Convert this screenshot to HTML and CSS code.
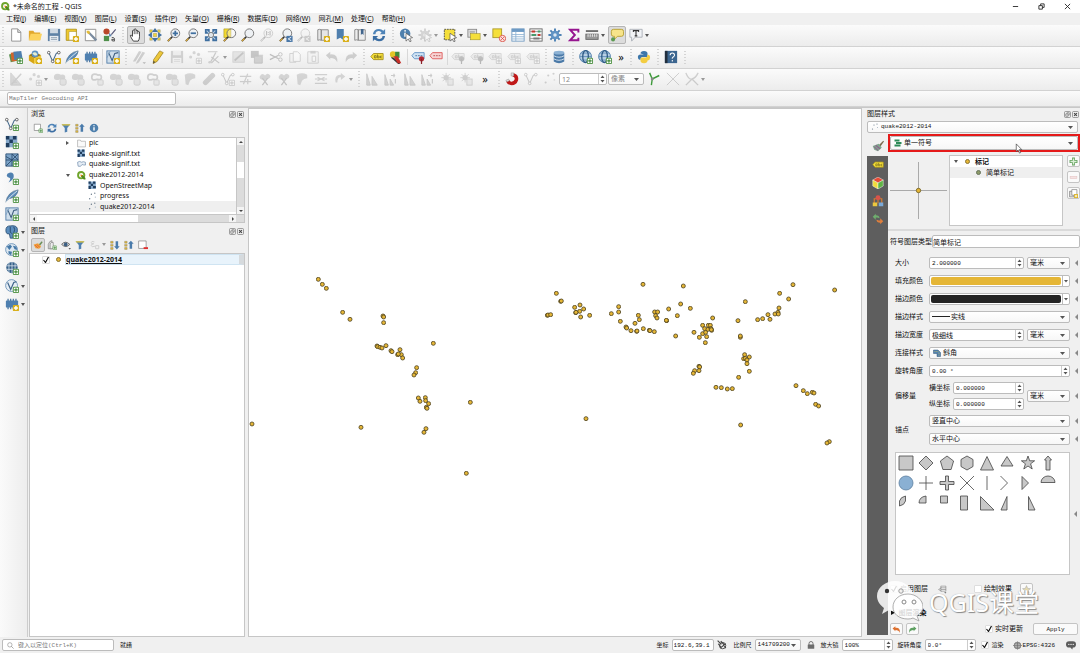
FILE: index.html
```
<!DOCTYPE html>
<html lang="zh-CN">
<head>
  <meta charset="UTF-8" />
  <title>*未命名的工程 - QGIS</title>
  <link rel="stylesheet" href="styles.css">
</head>
<body>
  <!-- icon sprite -->
  <svg class="sprite" aria-hidden="true">
    <defs>
      <marker id="quake" markerUnits="userSpaceOnUse" markerWidth="16" markerHeight="16" refX="8" refY="8">
        <circle cx="8" cy="8" r="6" fill="#e5b636" stroke="#4a4020" stroke-width="2.4" />
      </marker>
    </defs>
    <symbol id="badge-new" viewBox="0 0 16 16"><rect x="9" y="9" width="7" height="7" rx="1" fill="#d9b01c" /><path d="M12.500 10.200v4.600M10.200 12.500h4.600" stroke="#fff" stroke-width="1.600" /></symbol>
    <symbol id="badge-add" viewBox="0 0 16 16"><rect x="9.500" y="9.500" width="6" height="6" rx="1" fill="#fff" stroke="#5c9a52" stroke-width="1.200" /><path d="M12.500 10.500v4M10.500 12.500h4" stroke="#3f8a3a" stroke-width="1.300" /></symbol>
    <symbol id="qgis" viewBox="0 0 16 16"><circle cx="7.500" cy="7.500" r="5.600" fill="#fff" stroke="#6fa52c" stroke-width="3.400" /><path d="M7 7l3 .3 5 5v3h-3l-4.700-5z" fill="#4f8a1e" /><path d="M6 6l4 1-3 3z" fill="#ee7913" /></symbol>
    <symbol id="new" viewBox="0 0 16 16"><path d="M3 1h7l3.500 3.500V15H3z" fill="#fff" stroke="#8a8a8a" /><path d="M10 1v4h3.500" fill="#ddd" stroke="#8a8a8a" /></symbol>
    <symbol id="open" viewBox="0 0 16 16"><path d="M1 14V3h5l1.500 2H14v9z" fill="#e0a82e" /><path d="M1 14l2-7.500h13L14 14z" fill="#fcd35e" /></symbol>
    <symbol id="save" viewBox="0 0 16 16"><path d="M1 1h14v14H1z" fill="#5f82a6" /><path d="M3.500 1h9v5h-9z" fill="#cfd9e3" /><path d="M3 9h10v6H3z" fill="#e8edf2" /><path d="M4.500 11h7M4.500 13h7" stroke="#8a9bad" /></symbol>
    <symbol id="layout" viewBox="0 0 16 16"><path d="M1.500 1.500H13V14H1.500z" fill="#fff" stroke="#a89023" /><path d="M1.500 1.500H13V4H4.500v10h-3z" fill="#f0c92f" stroke="#a89023" stroke-width=".6" /></symbol>
    <symbol id="layoutmgr" viewBox="0 0 16 16"><path d="M1.500 1.500h12v13h-12z" fill="#fff" stroke="#888" /><path d="M4 5l2-1 9 9-2 2z" fill="#7a8ca0" /><path d="M3 3l3 0 1 3-2 1-2-2z" fill="#e4bd3a" /></symbol>
    <symbol id="style" viewBox="0 0 16 16"><circle cx="4" cy="4" r="3.500" fill="#b9462a" /><path d="M9 7l5-6 1 1-5 6z" fill="#557" /><path d="M1 9h6v6H1z" fill="#4e8f4a" /><path d="M7 5l3 4-3 1z" fill="#5b83ad" /><path d="M10 11q4-1 3 4q-4 0-3-2h3" fill="none" stroke="#444" /></symbol>
    <symbol id="hand" viewBox="0 0 16 16"><path d="M5 15Q2 11 1.500 8.500q1-1 2.500 1V3q1.200-1 2 0V1.500q1.200-1 2 0V3q1-1 2 0v1.500q1.200-1 2 0V10q0 3-1.500 5z" fill="#fff" stroke="#333" /><path d="M6 3v4M8 3v4M10 4v3" stroke="#333" stroke-width=".8" /></symbol>
    <symbol id="pansel" viewBox="0 0 16 16"><path d="M2 2h3v3H2zM11 2h3v3h-3zM2 11h3v3H2zM11 11h3v3h-3zM6 6h4v4H6z" fill="#f0d63a" stroke="#777" stroke-width=".4" /><path d="M8 0l3.500 4.500h-7zM8 16l3.500-4.500h-7zM0 8l4.500-3.500v7zM16 8l-4.500-3.500v7z" fill="#4573a2" /></symbol>
    <symbol id="lens" viewBox="0 0 16 16"><path d="M1 15l5-5" stroke="#333" stroke-width="2" /><path d="M1 15l3-3" stroke="#d9a93c" stroke-width="1.600" /><circle cx="9.500" cy="6" r="5" fill="#eef1f4" stroke="#777" stroke-width="1.100" /></symbol>
    <symbol id="lens-clear" viewBox="0 0 16 16"><path d="M1 15l5-5" stroke="#333" stroke-width="2" /><path d="M1 15l3-3" stroke="#d9a93c" stroke-width="1.600" /><circle cx="9.500" cy="6" r="5" fill="#fff" fill-opacity=".35" stroke="#777" stroke-width="1.100" /></symbol>
    <symbol id="p-plus" viewBox="0 0 16 16"><path d="M9.500 3v6M6.500 6h6" stroke="#3f6f9f" stroke-width="2" /></symbol>
    <symbol id="p-minus" viewBox="0 0 16 16"><path d="M6.500 6h6" stroke="#3f6f9f" stroke-width="2" /></symbol>
    <symbol id="p-native" viewBox="0 0 16 16"><path d="M7.500 3.500v5M11.500 3.500v5M9.500 4.500v1M9.500 7v1" stroke="#444" stroke-width="1.300" /></symbol>
    <symbol id="p-sel" viewBox="0 0 16 16"><path d="M1 1h8v10H1z" fill="#f3d92f" stroke="#998a20" stroke-width=".6" /></symbol>
    <symbol id="p-left" viewBox="0 0 16 16"><rect x="8.500" y="9" width="7" height="7" fill="#4a78a8" /><path d="M14 10.500l-3.500 2 3.500 2" fill="none" stroke="#fff" /></symbol>
    <symbol id="full" viewBox="0 0 16 16"><path d="M1 1h5.500v5.500H1zM9.500 1H15v5.500H9.500zM1 9.500h5.500V15H1zM9.500 9.500H15V15H9.500z" fill="#3f6fa0" /><path d="M3 3l10 10M13 3L3 13" stroke="#b9cfe3" stroke-width="1.200" /><circle cx="8" cy="8" r="3" fill="#dfe6ec" stroke="#777" /></symbol>
    <symbol id="book" viewBox="0 0 16 16"><path d="M2 2q2-1 4 0v12q-2-1-4 0zM6 2h8v12H6z" fill="#e6e6e6" stroke="#858585" /></symbol>
    <symbol id="ribbon" viewBox="0 0 16 16"><path d="M2 1h8v13l-4-3-4 2z" fill="#4f7fae" /></symbol>
    <symbol id="bookmark" viewBox="0 0 16 16"><path d="M2 2q2-1 4 0v12q-2-1-4 0zM6 2h8v12H6z" fill="#ededed" stroke="#858585" /><path d="M9 1h3v7l-1.500-1.500L9 8z" fill="#41658c" /></symbol>
    <symbol id="refresh" viewBox="0 0 16 16"><path d="M1 7q1-6 7-6 3 0 5 2l2-2v6H9l2-2Q8 2.500 5.500 4 4 5 4 7z" fill="#4f84b8" /><path d="M15 9q-1 6-7 6-3 0-5-2l-2 2V9h6l-2 2q3 2.500 5.500 1Q12 11 12 9z" fill="#3c6ea3" /></symbol>
    <symbol id="info" viewBox="0 0 16 16"><circle cx="7" cy="6.500" r="6" fill="#4f80ad" /><path d="M7 5.500v4.500M7 2.500v1.600" stroke="#fff" stroke-width="2" /></symbol>
    <symbol id="arrow" viewBox="0 0 16 16"><path d="M8 6l7.500 5-3.300.7 1.700 3.300-1.500.8-1.800-3.300L8 15z" fill="#fff" stroke="#555" stroke-width=".8" /></symbol>
    <symbol id="gear" viewBox="0 0 16 16"><path d="M8 .5v15M.5 8h15M2.700 2.700l10.600 10.600M13.300 2.700L2.700 13.300" stroke="#4f83b5" stroke-width="2.200" /><circle cx="8" cy="8" r="5" fill="#5f93c4" /><circle cx="8" cy="8" r="2" fill="#dce8f2" /></symbol>
    <symbol id="select" viewBox="0 0 16 16"><rect x="1.500" y="1.500" width="12" height="12" fill="#f5df3a" stroke="#444" stroke-dasharray="2 1" /></symbol>
    <symbol id="selform" viewBox="0 0 16 16"><rect x="1" y="1.500" width="10" height="9" fill="#ddd" stroke="#888" /><path d="M3 4.500h6" stroke="#888" /><rect x="4" y="6.500" width="11" height="7" fill="#f5df3a" stroke="#998a20" stroke-width=".6" /></symbol>
    <symbol id="defined" viewBox="0 0 16 16"><path d="M5 2h9v9H5zM5 5h9M5 8h9M6 5L1 8l5 3" fill="#f4f4f4" stroke="#777" /><path d="M11 13h4l-2 2z" fill="#555" /></symbol>
    <symbol id="deselect" viewBox="0 0 16 16"><rect x="1" y="1" width="10" height="10" fill="#f5df3a" stroke="#aa982a" /><circle cx="12" cy="12" r="3.600" fill="#fbe3e1" stroke="#d8493e" /><path d="M10.500 10.500l3 3M13.500 10.500l-3 3" stroke="#d8493e" /></symbol>
    <symbol id="table" viewBox="0 0 16 16"><rect x="1" y="1" width="14" height="14" fill="#fff" stroke="#6d97bf" /><path d="M1 1h14v3.500H1z" fill="#6d9ac5" /><path d="M1 7.500h14M1 10h14M1 12.500h14M5.500 4v11" stroke="#8fb3d3" /></symbol>
    <symbol id="abacus" viewBox="0 0 16 16"><rect x="1" y="1" width="14" height="14" fill="#f4f4f4" stroke="#666" /><path d="M1 4h14M1 8h14M1 12h14" stroke="#999" /><path d="M3 4h4M10 8h3" stroke="#c8372d" stroke-width="2.200" /><path d="M10 4h3M3 8h5" stroke="#479a6b" stroke-width="2.200" /><path d="M5 12h7" stroke="#777" stroke-width="2.200" /></symbol>
    <symbol id="sigma" viewBox="0 0 16 16"><path d="M13 5V2H3.500L9 8l-5.500 6H13v-3" fill="none" stroke="#96158f" stroke-width="2.200" /></symbol>
    <symbol id="ruler" viewBox="0 0 16 16"><path d="M1 3.500h14" stroke="#666" stroke-width="2" /><rect x="1" y="7" width="14" height="6" fill="#999" stroke="#666" /><path d="M3.500 7v3M6 7v3M8.500 7v3M11 7v3M13.500 7v3" stroke="#eee" /></symbol>
    <symbol id="tip" viewBox="0 0 16 16"><path d="M4 1.500h9q2.500 0 2.500 2.500v3q0 2.500-2.500 2.500H8.500L5 13V9.500H4Q1.500 9.500 1.500 7V4Q1.500 1.500 4 1.500z" fill="#f7e48a" stroke="#b39c2c" /><circle cx="3.500" cy="13" r="2.300" fill="#5c9a52" /></symbol>
    <symbol id="textnote" viewBox="0 0 16 16"><path d="M1 1.500h14v9H7L3 15v-4.500H1z" fill="#f1f3f6" stroke="#a8adb5" /><path d="M5 4.500V3h6v1.500M8 3v6M6.500 9h3" fill="none" stroke="#333" stroke-width="1.200" /></symbol>
    <symbol id="layers" viewBox="0 0 16 16"><path d="M0 5l8-2 2 9-8 2z" fill="#5b9150" /><path d="M2 3l8-1 2 10-9 1z" fill="#d0662c" /><path d="M5 2l9-1 1.500 9-9.500 1.500z" fill="#4d7eae" /></symbol>
    <symbol id="gpkg" viewBox="0 0 16 16"><path d="M1 6l6 3v7l-6-4z" fill="#d7a614" /><path d="M7 9l8-3v6l-8 4z" fill="#f2cb3b" /><path d="M1 6l7-4 7 4-8 3z" fill="#9b770e" /><circle cx="8" cy="4.500" r="3.800" fill="#5d93c5" /><path d="M5 4q3-3 5 0t-3 2z" fill="#e7efd2" /></symbol>
    <symbol id="vec" viewBox="0 0 16 16"><path d="M2 3l4.500 10L10.500 4q1-1 3-1" fill="none" stroke="#466a8c" stroke-width="1.200" /><circle cx="2" cy="3" r="1.500" fill="#fff" stroke="#555" /><circle cx="6.500" cy="13" r="1.500" fill="#fff" stroke="#555" /><circle cx="13.500" cy="3" r="1.500" fill="#fff" stroke="#555" /></symbol>
    <symbol id="feather" viewBox="0 0 16 16"><path d="M1 15Q3 3 15 1q-1 8-10 10z" fill="#5d8dbb" stroke="#3b607f" stroke-width=".7" /><path d="M1 15Q6 8 14 2" stroke="#e6eef5" fill="none" /></symbol>
    <symbol id="chip" viewBox="0 0 16 16"><path d="M3.500 2v12M6.500 2v12M9.500 2v12M12.500 2v12" stroke="#44709c" stroke-width="1.400" /><rect x="1" y="4" width="14" height="8" rx="1" fill="#4f80b0" /></symbol>
    <symbol id="vbox" viewBox="0 0 16 16"><rect x="1" y="1" width="14" height="14" fill="#cfdeeb" stroke="#4f7ba6" /><path d="M3 3l4 9 3-8 4-1" fill="none" stroke="#3f5f80" stroke-width="1.200" /><path d="M1 9l4-8M10 15l5-8" stroke="#7ba0c2" /></symbol>
    <symbol id="pencil" viewBox="0 0 16 16"><path d="M3 11L10 1l4 2-7 10-4.500 2.500z" fill="#ecc73b" stroke="#9a7a16" stroke-width=".8" /><path d="M2.500 15.500l.3-3 2.200 1.300z" fill="#444" /></symbol>
    <symbol id="pencils" viewBox="0 0 16 16"><path d="M1 13L8 1l3 1-7 11zM5 14l7-12 3 1-7 11-3 2z" fill="#777" /><path d="M12 14h4l-2 2z" fill="#333" /></symbol>
    <symbol id="dots" viewBox="0 0 16 16"><circle cx="3" cy="8" r="1.800" fill="#888" /><circle cx="7" cy="3" r="1.800" fill="#888" /><circle cx="12" cy="5" r="1.800" fill="#888" /></symbol>
    <symbol id="vertex" viewBox="0 0 16 16"><path d="M1 2h11M4 14L10 3M5 8l9 7M13 7l-8 8" stroke="#666" stroke-width="1.400" /><circle cx="3" cy="14" r="1.500" fill="#888" /></symbol>
    <symbol id="form" viewBox="0 0 16 16"><rect x="1" y="2" width="13" height="12" fill="#bbb" stroke="#888" /><path d="M3 12L13 3" stroke="#555" stroke-width="2" /></symbol>
    <symbol id="trash" viewBox="0 0 16 16"><rect x="1" y="1" width="9" height="8" fill="#a44" /><path d="M4 6h11M5 7h9v8H5z" stroke="#555" fill="#b77" /></symbol>
    <symbol id="cut" viewBox="0 0 16 16"><path d="M1 5l10 5M1 11l10-5" stroke="#444" stroke-width="1.400" /><circle cx="13" cy="5" r="2" fill="none" stroke="#444" /><circle cx="13" cy="11" r="2" fill="none" stroke="#444" /></symbol>
    <symbol id="copy" viewBox="0 0 16 16"><path d="M2 4h7v10H2z" fill="#eee" stroke="#777" /><path d="M6 2h5l3 3v8H6z" fill="#fff" stroke="#777" /></symbol>
    <symbol id="paste" viewBox="0 0 16 16"><path d="M2 2h12v13H2z" fill="#eee" stroke="#777" /><path d="M5 1h6v3H5z" fill="#777" /><path d="M7 7h4v6H7z" fill="#fff" stroke="#777" /></symbol>
    <symbol id="undo" viewBox="0 0 16 16"><path d="M1 6l5-4v3q9-1 8 9-2-5-8-5v2z" fill="currentColor" /></symbol>
    <symbol id="redo" viewBox="0 0 16 16"><path d="M15 6l-5-4v3Q1 4 2 14q2-5 8-5v2z" fill="currentColor" /></symbol>
    <symbol id="label" viewBox="0 0 16 16"><path d="M4 4h11v7H4L1 7.500z" fill="#f6e03a" stroke="#a38d1e" /><path d="M5 9V6.500h2V9zM8.500 5v4h2V7h-2M13.500 7h-1.500v2h1.500" fill="none" stroke="#5a4f14" stroke-width=".7" /></symbol>
    <symbol id="labelblue" viewBox="0 0 16 16"><path d="M4 3h11v7H4L1 6.500z" fill="#cfe2f4" stroke="#5b8fc4" /><path d="M5 6.500h8" stroke="#47739f" stroke-dasharray="2 1" /></symbol>
    <symbol id="labelred" viewBox="0 0 16 16"><path d="M4 3h11v7H4L1 6.500z" fill="#f7d3d3" stroke="#dd5555" /><path d="M5 6.500h8" stroke="#b54c4c" stroke-dasharray="2 1" /></symbol>
    <symbol id="pin" viewBox="0 0 16 16"><circle cx="12" cy="10" r="3" fill="#b22a35" /><path d="M12 10v6" stroke="#8a1f28" stroke-width="1.400" /></symbol>
    <symbol id="diagram" viewBox="0 0 16 16"><path d="M3 8l9 8" stroke="#333" stroke-width="2" /><circle cx="4.500" cy="5" r="3.500" fill="#e2c527" /><path d="M7 2h5v7H7z" fill="#3f8a3a" /><path d="M5 7l5 0 4 8h-4z" fill="#c62f28" /></symbol>
    <symbol id="db" viewBox="0 0 16 16"><path d="M2 3v10q6 4 12 0V3z" fill="#4b7aa8" /><ellipse cx="8" cy="3" rx="6" ry="2.200" fill="#8db2d4" /><path d="M2 6.500q6 3.500 12 0M2 10q6 3.500 12 0" stroke="#dfe9f2" fill="none" /></symbol>
    <symbol id="globe" viewBox="0 0 16 16"><circle cx="7.500" cy="7.500" r="6.800" fill="#b9d0e4" stroke="#4c7ba8" /><path d="M1 7.500h13M2.500 3.500h10M2.500 11.500h10" stroke="#5f8db8" /><ellipse cx="7.500" cy="7.500" rx="3.200" ry="6.800" fill="none" stroke="#2f5b86" stroke-width="1.500" /></symbol>
    <symbol id="world" viewBox="0 0 16 16"><circle cx="7.500" cy="7.500" r="6.800" fill="#dce7f0" stroke="#6d94b8" /><path d="M2 4l4-2 2 2-3 4zM9 3l4 1 1 4-3-1zM4 9l4 1-1 4-3-2zM10 9l3 1-2 3z" fill="#4679a8" /></symbol>
    <symbol id="wms" viewBox="0 0 16 16"><circle cx="8" cy="7.500" r="6.500" fill="#345f88" /><path d="M2 5.500h12M2 9.500h12M8 1v13M4.500 2v11M11.500 2v11" stroke="#dbe6ef" stroke-width=".9" /></symbol>
    <symbol id="wfs" viewBox="0 0 16 16"><circle cx="7.500" cy="7.500" r="6.800" fill="#e7eef5" stroke="#6d94b8" /><path d="M3 4l3.500 8L10 4l3-1" fill="none" stroke="#41668b" stroke-width="1.400" /></symbol>
    <symbol id="python" viewBox="0 0 16 16"><path d="M4 4q0-3 4-3t4 3v3q0 1-2 1H6Q4 8 4 11H3Q1 11 1 8t3-3h4" fill="#3c76a9" /><path d="M12 12q0 3-4 3t-4-3V9.500Q4 8.500 6 8.500h4q2 0 2-3h1q2 0 2 3t-3 3.500H8" fill="#f3cd41" /></symbol>
    <symbol id="help" viewBox="0 0 16 16"><path d="M1 1h14v14H1z" fill="#3c6690" /><path d="M1 1h3v14H1z" fill="#222f3d" /><path d="M7 6q0-2.500 2.500-2.500T12 6q0 1-1.500 2t-1 2M9.500 11.500v1.500" fill="none" stroke="#fff" stroke-width="1.200" /></symbol>
    <symbol id="square" viewBox="0 0 16 16"><path d="M2 1v14h12zM5 9v3h4z" fill="#999" stroke="#777" fill-rule="evenodd" /><path d="M3 14L14 2" stroke="#a66" stroke-width="1.600" /></symbol>
    <symbol id="blob" viewBox="0 0 16 16"><path d="M1 6q0-4 4-4 2 0 4 1 5-1 5 3t-4 3Q8 8 6 9 1 10 1 6z" fill="#888" /><rect x="8" y="8" width="7" height="7" rx="2" fill="#bbb" stroke="#777" /></symbol>
    <symbol id="ring" viewBox="0 0 16 16"><path d="M2 6q0-3.500 3.500-3.500 2 0 3.500 1 4-1 4 2.500t-4 2.500Q7 8 6 9 2 9.500 2 6z" fill="none" stroke="#777" stroke-width="2" /><rect x="9" y="9" width="6" height="6" rx="1" fill="#ccc" stroke="#777" /></symbol>
    <symbol id="patch" viewBox="0 0 16 16"><path d="M2 3q6-3 12 0v4q-4 0-6 3l-2 5-3-1z" fill="#888" /></symbol>
    <symbol id="sausage" viewBox="0 0 16 16"><path d="M4 12l8-8" stroke="#777" stroke-width="6" stroke-linecap="round" /></symbol>
    <symbol id="split" viewBox="0 0 16 16"><path d="M1 5h13M1 11h13M5 14l5-12M10 14V8" stroke="#777" stroke-width="1.400" /></symbol>
    <symbol id="snip" viewBox="0 0 16 16"><path d="M2 5q3-5 6-1 3-4 6 0 1 4-6 5-7 0-6-4z" fill="#888" /><path d="M5 15l6-8M11 15L5 7" stroke="#555" stroke-width="1.400" /></symbol>
    <symbol id="merge" viewBox="0 0 16 16"><path d="M1 3h14M1 13h14M4 6l4 2 4-2M4 10l4-2 4 2M1 8h14" stroke="#777" fill="none" stroke-width="1.200" /></symbol>
    <symbol id="rotate" viewBox="0 0 16 16"><path d="M3 12Q1 3 9 3l0-2 5 4-5 4V6Q5 6 5 12z" fill="#888" /></symbol>
    <symbol id="peaks" viewBox="0 0 16 16"><path d="M2 15V2l4 13zM8 15V5l6 10z" fill="#888" stroke="#666" /></symbol>
    <symbol id="peaks2" viewBox="0 0 16 16"><path d="M1 15V3l4 12zM7 15V8l4 7z" fill="#888" stroke="#666" /><path d="M8 4h4l-1-2M12 4l-1 2M13 8v5" stroke="#666" fill="none" stroke-width="1.300" /></symbol>
    <symbol id="sun" viewBox="0 0 16 16"><path d="M7 1v11M1.500 6.500h11M3 2.500l8 8M11 2.500l-8 8" stroke="#777" /><circle cx="7" cy="6.500" r="3" fill="#777" /><rect x="9" y="8" width="6" height="7" fill="#ccc" stroke="#777" /></symbol>
    <symbol id="magnet" viewBox="0 0 16 16"><path d="M9 3q5 1.500 4 6-1.500 4.500-6.500 4Q4 12.500 3 10" fill="none" stroke="#c01818" stroke-width="4" /><path d="M7 1h3v3.500H7zM1 9.500l3-1.500 1 2-3 1.500z" fill="#ddd" stroke="#888" stroke-width=".5" /></symbol>
    <symbol id="node" viewBox="0 0 16 16"><path d="M3 1l3 7 8-4M6 8l-1 7" stroke="#3d9b3a" fill="none" stroke-width="1.600" /><circle cx="6" cy="8" r="1.700" fill="#888" /></symbol>
    <symbol id="cross" viewBox="0 0 16 16"><path d="M1 1l14 14M15 1L1 15" stroke="#666" /></symbol>
    <symbol id="inter" viewBox="0 0 16 16"><path d="M1 1q3 8 7 7t7-7M1 15l7-7 7 7" stroke="#6a7a50" fill="none" stroke-width="1.600" /></symbol>
    <symbol id="checker" viewBox="0 0 16 16"><path d="M1 1h13v13H1z" fill="#86a9cb" /><path d="M1 1h4v4H1zM9 1h4v4H9zM5 5h4v4H5zM1 9h4v5H1zM9 9h5v4H9z" fill="#1f3d5e" /></symbol>
    <symbol id="mesh" viewBox="0 0 16 16"><path d="M1 1h14v14H1z" fill="#7ba3c8" stroke="#2f5478" /><path d="M1 8h14M8 1v14M15 1L1 15M1 4l7 4M8 1l7 7" stroke="#2a4a6c" /></symbol>
    <symbol id="comma" viewBox="0 0 16 16"><path d="M5 2q5-1 5 4 0 4-6 7 3-4 1.500-5Q2 7 2 5t3-3z" fill="#4f80b0" /></symbol>
    <symbol id="elephant" viewBox="0 0 16 16"><path d="M1 6q0-5 5-5 7-1 8 3 1 5-2 6l-3 0v5H6L5 10q-4 1-4-4z" fill="#5b8dbd" stroke="#2f5478" /><path d="M6 2v6l2 2M10 2q2 3 0 7" stroke="#234566" fill="none" /></symbol>
    <symbol id="funnel" viewBox="0 0 16 16"><path d="M1 2h14L10 8v6l-4 1V8z" fill="#4f80b0" /><path d="M1 2h14l-1 2H2z" fill="#e3c83d" /></symbol>
    <symbol id="addsel" viewBox="0 0 16 16"><path d="M2 2h10v10H2z" fill="#fff" stroke="#777" /></symbol>
    <symbol id="collapse" viewBox="0 0 16 16"><path d="M1 2h4v3H1zM1 7h4v3H1zM1 12h4v3H1z" fill="#e1b93a" stroke="#666" stroke-width=".5" /><path d="M11 1l4.500 5H13v8H9V6H6.500z" fill="#4a7bab" /></symbol>
    <symbol id="expand" viewBox="0 0 16 16"><path d="M1 2h4v3H1zM1 7h4v3H1zM1 12h4v3H1z" fill="#e1b93a" stroke="#666" stroke-width=".5" /><path d="M11 15l4.500-5H13V2H9v8H6.500z" fill="#4a7bab" /></symbol>
    <symbol id="brush" viewBox="0 0 16 16"><path d="M9 7l5-5 1.500 1.500L11 9z" fill="#6b8f58" /><path d="M1 7l7-2 5 5-3 4-6-1z" fill="#f3a63a" /><path d="M3 8l5 5M6 7l5 5" stroke="#d9533c" stroke-width="1.300" /></symbol>
    <symbol id="broom" viewBox="0 0 16 16"><path d="M9 7l6-6 1 1-5 7z" fill="#7a6a50" /><path d="M1 8l8-3 4 5-5 5-5-2z" fill="#7fa68c" /><path d="M3 9l5 5M5 7l6 5" stroke="#8f5f8f" stroke-width="1.400" /></symbol>
    <symbol id="group" viewBox="0 0 16 16"><path d="M2 14V7q2-6 6-6v13z" fill="#ddd" stroke="#777" /><path d="M5 14V6q2-3 5-2v10z" fill="#eee" stroke="#777" /></symbol>
    <symbol id="eye" viewBox="0 0 16 16"><path d="M1 7q6-7 13 0-6 7-13 0z" fill="#ddd" stroke="#555" stroke-width="1.300" /><circle cx="7.500" cy="7" r="3" fill="#3b5f83" /><path d="M12 13h4l-2 2z" fill="#333" /></symbol>
    <symbol id="epsilon" viewBox="0 0 16 16"><path d="M7 3Q2 1 2 4t4 2Q2 6 2 9t6 1M9 9h5v5H9z" fill="none" stroke="#777" stroke-width="1.400" /></symbol>
    <symbol id="remove" viewBox="0 0 16 16"><path d="M1 1.500h12v12H1z" fill="#fff" stroke="#777" /><path d="M9 13h7" stroke="#e03030" stroke-width="3" /></symbol>
    <symbol id="folder" viewBox="0 0 16 16"><path d="M1 14V2h5l1 2h8v10z" fill="#fafafa" stroke="#999" /></symbol>
    <symbol id="poly" viewBox="0 0 16 16"><path d="M1 4q4-3 7 0 3-2 7 0v5q-4 0-6-1-2 5-7 3z" fill="#e5edf5" stroke="#7e98b4" stroke-width="1.400" /></symbol>
    <symbol id="points" viewBox="0 0 16 16"><circle cx="3" cy="12" r="1.200" fill="#678" /><circle cx="6" cy="4" r="1.200" fill="#678" /><circle cx="12" cy="2" r="1.200" fill="#678" /><circle cx="13" cy="9" r="1" fill="#9ab" /></symbol>
    <symbol id="cube" viewBox="0 0 16 16"><path d="M8 0l7 4-7 4-7-4z" fill="#e84b36" stroke="#fff" stroke-width=".6" /><path d="M1 4l7 4v8l-7-4z" fill="#f2dc3b" stroke="#fff" stroke-width=".6" /><path d="M15 4L8 8v8l7-4z" fill="#5fb445" stroke="#fff" stroke-width=".6" /></symbol>
    <symbol id="masks" viewBox="0 0 16 16"><path d="M3 11V5h10v6M8 5v6" fill="none" stroke="#d87b32" stroke-width="1.600" /><circle cx="8" cy="3.500" r="3.300" fill="#d9534a" /><rect x="1" y="10" width="6" height="5" fill="#ecc83e" /><rect x="9" y="10" width="6" height="5" fill="#7aa9d8" /></symbol>
    <symbol id="history" viewBox="0 0 16 16"><path d="M1 5l4-4v2q5 0 5 4L7 6H5v3z" fill="#6fae6e" /><path d="M15 11l-4 4v-2q-5 0-5-4l3 1h2V7z" fill="#e07f3c" /></symbol>
    <symbol id="single" viewBox="0 0 16 16"><path d="M1 3h10M4 8h11M1 13h12" stroke="#2c8a57" stroke-width="3.800" /></symbol>
    <symbol id="bevel" viewBox="0 0 16 16"><path d="M1 2h9l5 5v8H8V9H1z" fill="#5583b0" stroke="#2f5478" /><path d="M3 5h7l2 3v6" fill="none" stroke="#efd84a" stroke-dasharray="2 1.500" /></symbol>
    <symbol id="star-off" viewBox="0 0 16 16"><path d="M8 1l2 5 5 .5-4 3 1.500 5.500L8 12l-4.500 3L5 9.500l-4-3L6 6z" fill="#e8dcae" stroke="#aaa" /></symbol>
    <symbol id="lock" viewBox="0 0 16 16"><path d="M4 8V5q0-4 4-4t4 4v3" fill="none" stroke="#777" stroke-width="2" /><rect x="1.500" y="7" width="13" height="8.500" rx="1" fill="#6c6c6c" /></symbol>
    <symbol id="extent" viewBox="0 0 16 16"><circle cx="9" cy="9" r="5" fill="none" stroke="#555" stroke-width="1.600" /><path d="M1 1l6 6M6 2l4 4M2 6l4 5M9 4l5 9M5 13l9-7" stroke="#444" stroke-width="1.800" /></symbol>
    <symbol id="crs" viewBox="0 0 16 16"><circle cx="8" cy="8" r="6" fill="#bbb" stroke="#777" stroke-width="1.400" /><path d="M0 8h16M8 1v14M3 5h10M3 11h10" stroke="#666" /></symbol>
    <symbol id="chat" viewBox="0 0 16 16"><path d="M5 2h6q5 0 5 5t-5 5l-1 3-3-3H5Q0 12 0 7t5-5z" fill="#5c5c5c" /><circle cx="4.500" cy="7" r="1" fill="#fff" /><circle cx="8" cy="7" r="1" fill="#fff" /><circle cx="11.500" cy="7" r="1" fill="#fff" /></symbol>
    <symbol id="search" viewBox="0 0 16 16"><circle cx="6.500" cy="6.500" r="5" fill="none" stroke="#888" stroke-width="1.400" /><path d="M10 10l5 5" stroke="#888" stroke-width="1.600" /></symbol>
    <symbol id="float" viewBox="0 0 12 12"><rect x=".8" y=".8" width="10.400" height="10.400" rx="2" fill="none" stroke="#777" stroke-width="1.200" /><path d="M3 5h4v4H3zM5 5V3h4v4H7" fill="none" stroke="#777" stroke-width="1.200" /></symbol>
    <symbol id="close" viewBox="0 0 12 12"><rect x=".8" y=".8" width="10.400" height="10.400" rx="2" fill="none" stroke="#777" stroke-width="1.200" /><path d="M3.500 3.500l5 5M8.500 3.500l-5 5" stroke="#444" stroke-width="1.800" /></symbol>
    <symbol id="addcross" viewBox="0 0 16 16"><path d="M8 1v14M1 8h14" stroke="#5f9f5a" stroke-width="5" /><path d="M8 2.500v11M2.500 8h11" stroke="#d9efd6" stroke-width="2.400" /></symbol>
    <symbol id="minusred" viewBox="0 0 16 16"><rect x="2" y="6" width="12" height="4" fill="#f5e3e3" stroke="#e5c4c4" /></symbol>
    <symbol id="dup" viewBox="0 0 16 16"><path d="M1 4h8v10H1z" fill="#ddd" stroke="#666" /><path d="M5 1h9v10H5z" fill="#fff" stroke="#666" /></symbol>
  </svg>

  <header class="titlebar">
    <svg class="logo"><use href="#qgis" /></svg>
    <span class="title">*未命名的工程 - QGIS</span>
    <div class="window-buttons">
      <button aria-label="最小化"><svg viewBox="0 0 8 8"><path d="M1 4h6" /></svg></button>
      <button aria-label="还原"><svg viewBox="0 0 8 8"><path d="M1 3h4v4H1zM3 3V1h4v4H5" /></svg></button>
      <button aria-label="关闭"><svg viewBox="0 0 8 8"><path d="M1 1l6 6M7 1L1 7" /></svg></button>
    </div>
  </header>

  <nav class="menubar">
    <a href="#">工程(<u>J</u>)</a>
    <a href="#">编辑(<u>E</u>)</a>
    <a href="#">视图(<u>V</u>)</a>
    <a href="#">图层(<u>L</u>)</a>
    <a href="#">设置(<u>S</u>)</a>
    <a href="#">插件(<u>P</u>)</a>
    <a href="#">矢量(<u>O</u>)</a>
    <a href="#">栅格(<u>R</u>)</a>
    <a href="#">数据库(<u>D</u>)</a>
    <a href="#">网络(<u>W</u>)</a>
    <a href="#">网孔(<u>M</u>)</a>
    <a href="#">处理(<u>C</u>)</a>
    <a href="#">帮助(<u>H</u>)</a>
  </nav>

  <div class="toolbar">
    <div class="group">
      <button class="ib"><svg><use href="#new" /></svg></button>
      <button class="ib"><svg><use href="#open" /></svg></button>
      <button class="ib"><svg><use href="#save" /></svg></button>
      <button class="ib"><svg><use href="#layout" /><use href="#badge-new" /></svg></button>
      <button class="ib"><svg><use href="#layoutmgr" /></svg></button>
      <button class="ib"><svg><use href="#style" /></svg></button>
    </div>
    <div class="group">
      <button class="ib on"><svg><use href="#hand" /></svg></button>
      <button class="ib"><svg><use href="#pansel" /></svg></button>
      <button class="ib"><svg><use href="#lens" /><use href="#p-plus" /></svg></button>
      <button class="ib"><svg><use href="#lens" /><use href="#p-minus" /></svg></button>
      <button class="ib"><svg><use href="#full" /></svg></button>
      <button class="ib"><svg><use href="#p-sel" /><use href="#lens-clear" /></svg></button>
      <button class="ib"><svg><use href="#lens" /></svg></button>
      <button class="ib off"><svg><use href="#lens" /><use href="#p-native" /></svg></button>
      <button class="ib"><svg><use href="#lens" /><use href="#p-left" /></svg></button>
      <button class="ib off"><svg><use href="#lens" /><use href="#p-left" /></svg></button>
      <button class="ib"><svg><use href="#book" /><use href="#badge-new" /></svg></button>
      <button class="ib"><svg><use href="#ribbon" /><use href="#badge-new" /></svg></button>
      <button class="ib"><svg><use href="#bookmark" /></svg></button>
      <button class="ib"><svg><use href="#refresh" /></svg></button>
    </div>
    <div class="group">
      <button class="ib"><svg><use href="#info" /><use href="#arrow" /></svg></button>
      <button class="ib off drop"><svg><use href="#gear" /><use href="#arrow" /></svg></button>
      <button class="ib drop"><svg><use href="#select" /><use href="#arrow" /></svg></button>
      <button class="ib drop"><svg><use href="#selform" /></svg></button>
      <button class="ib"><svg><use href="#deselect" /></svg></button>
      <button class="ib"><svg><use href="#table" /></svg></button>
      <button class="ib"><svg><use href="#abacus" /></svg></button>
      <button class="ib"><svg><use href="#gear" /></svg></button>
      <button class="ib"><svg><use href="#sigma" /></svg></button>
      <button class="ib drop"><svg><use href="#ruler" /></svg></button>
      <button class="ib on"><svg><use href="#tip" /></svg></button>
      <button class="ib drop"><svg><use href="#textnote" /></svg></button>
    </div>
  </div>

  <div class="toolbar">
    <div class="group">
      <button class="ib"><svg><use href="#layers" /><use href="#badge-add" /></svg></button>
      <button class="ib"><svg><use href="#gpkg" /><use href="#badge-new" /></svg></button>
      <button class="ib"><svg><use href="#vec" /><use href="#badge-new" /></svg></button>
      <button class="ib"><svg><use href="#feather" /><use href="#badge-new" /></svg></button>
      <button class="ib"><svg><use href="#chip" /><use href="#badge-new" /></svg></button>
      <span class="sep"></span>
      <button class="ib"><svg><use href="#vbox" /><use href="#badge-new" /></svg></button>
    </div>
    <div class="group">
      <button class="ib off"><svg><use href="#pencils" /></svg></button>
      <button class="ib"><svg><use href="#pencil" /></svg></button>
      <button class="ib off"><svg><use href="#save" /></svg></button>
      <button class="ib off"><svg><use href="#dots" /><use href="#badge-add" /></svg></button>
      <button class="ib off drop"><svg><use href="#vertex" /></svg></button>
      <button class="ib off"><svg><use href="#form" /></svg></button>
      <button class="ib off"><svg><use href="#trash" /></svg></button>
      <button class="ib off"><svg><use href="#cut" /></svg></button>
      <button class="ib off"><svg><use href="#copy" /></svg></button>
      <button class="ib off"><svg><use href="#paste" /></svg></button>
      <button class="ib off"><svg><use href="#undo" /></svg></button>
      <button class="ib off"><svg><use href="#redo" /></svg></button>
    </div>
    <div class="group">
      <button class="ib"><svg><use href="#label" /></svg></button>
      <button class="ib"><svg><use href="#diagram" /></svg></button>
      <span class="sep"></span>
      <button class="ib"><svg><use href="#labelblue" /><use href="#pin" /></svg></button>
      <button class="ib"><svg><use href="#labelred" /></svg></button>
      <span class="sep"></span>
      <button class="ib off"><svg><use href="#label" /><use href="#pin" /></svg></button>
      <button class="ib off"><svg><use href="#label" /><use href="#pin" /></svg></button>
      <button class="ib off"><svg><use href="#label" /><use href="#badge-add" /></svg></button>
      <button class="ib off"><svg><use href="#label" /><use href="#badge-add" /></svg></button>
      <button class="ib off"><svg><use href="#label" /><use href="#badge-add" /></svg></button>
    </div>
    <div class="group">
      <button class="ib"><svg><use href="#db" /></svg></button>
    </div>
    <div class="group">
      <button class="ib"><svg><use href="#globe" /><use href="#badge-add" /></svg></button>
      <button class="ib"><svg><use href="#globe" /><use href="#badge-add" /></svg></button>
      <button class="more">»</button>
    </div>
    <div class="group">
      <button class="ib"><svg><use href="#python" /></svg></button>
    </div>
    <div class="group">
      <button class="ib"><svg><use href="#help" /></svg></button>
    </div>
    <div class="group"></div>
  </div>

  <div class="toolbar">
    <div class="group">
      <button class="ib off"><svg><use href="#square" /></svg></button>
      <button class="ib off drop"><svg><use href="#dots" /><use href="#badge-add" /></svg></button>
      <button class="ib off"><svg><use href="#blob" /></svg></button>
      <button class="ib off"><svg><use href="#blob" /></svg></button>
      <button class="ib off"><svg><use href="#ring" /></svg></button>
      <button class="ib off"><svg><use href="#blob" /></svg></button>
      <button class="ib off"><svg><use href="#blob" /></svg></button>
      <button class="ib off"><svg><use href="#ring" /></svg></button>
      <button class="ib off"><svg><use href="#blob" /></svg></button>
      <button class="ib off"><svg><use href="#patch" /></svg></button>
      <button class="ib off"><svg><use href="#sausage" /></svg></button>
      <button class="ib off"><svg><use href="#vec" /><use href="#badge-add" /></svg></button>
      <button class="ib off"><svg><use href="#split" /></svg></button>
      <button class="ib off"><svg><use href="#snip" /></svg></button>
      <button class="ib off"><svg><use href="#snip" /></svg></button>
      <button class="ib off"><svg><use href="#patch" /></svg></button>
      <button class="ib off"><svg><use href="#merge" /></svg></button>
      <button class="ib off drop"><svg><use href="#rotate" /></svg></button>
    </div>
    <div class="group">
      <button class="ib off"><svg><use href="#peaks" /></svg></button>
      <button class="ib off"><svg><use href="#peaks2" /></svg></button>
      <button class="ib off"><svg><use href="#peaks" /></svg></button>
      <button class="ib off"><svg><use href="#peaks2" /></svg></button>
      <button class="ib off"><svg><use href="#sun" /></svg></button>
      <button class="ib off"><svg><use href="#sun" /></svg></button>
      <button class="more wide">»</button>
    </div>
    <div class="group">
      <button class="ib"><svg><use href="#magnet" /></svg></button>
      <button class="ib off"><svg><use href="#vec" /></svg></button>
      <button class="ib off"><svg><use href="#points" /></svg></button>
      <input class="field spin tolerance" type="text" value="12" aria-label="捕捉容差" disabled />
      <select class="field unit-px" aria-label="单位" disabled><option>像素</option></select>
      <button class="ib"><svg><use href="#node" /></svg></button>
      <button class="ib off"><svg><use href="#cross" /></svg></button>
      <button class="ib off drop"><svg><use href="#inter" /></svg></button>
    </div>
  </div>

  <div class="toolbar geocode">
    <input class="field" type="text" placeholder="MapTiler Geocoding API" aria-label="MapTiler Geocoding API" />
  </div>

  <main class="workspace">
    <aside class="side-tools">
      <button class="ib"><svg><use href="#vec" /><use href="#badge-add" /></svg></button>
      <button class="ib"><svg><use href="#checker" /><use href="#badge-add" /></svg></button>
      <button class="ib"><svg><use href="#mesh" /><use href="#badge-add" /></svg></button>
      <button class="ib"><svg><use href="#comma" /><use href="#badge-add" /></svg></button>
      <button class="ib"><svg><use href="#feather" /><use href="#badge-add" /></svg></button>
      <button class="ib"><svg><use href="#vbox" /><use href="#badge-add" /></svg></button>
      <button class="ib drop"><svg><use href="#elephant" /><use href="#badge-add" /></svg></button>
      <button class="ib drop"><svg><use href="#world" /><use href="#badge-add" /></svg></button>
      <button class="ib"><svg><use href="#wms" /><use href="#badge-add" /></svg></button>
      <button class="ib drop"><svg><use href="#wfs" /><use href="#badge-add" /></svg></button>
      <button class="ib drop"><svg><use href="#chip" /><use href="#badge-new" /></svg></button>
    </aside>

    <div class="left-docks">
      <section class="dock">
        <div class="dock-title">
          <span>浏览</span>
          <button aria-label="浮动"><svg><use href="#float" /></svg></button>
          <button aria-label="关闭"><svg><use href="#close" /></svg></button>
        </div>
        <div class="dock-tools">
          <button><svg><use href="#addsel" /><use href="#badge-add" /></svg></button>
          <button><svg><use href="#refresh" /></svg></button>
          <button><svg><use href="#funnel" /></svg></button>
          <button><svg><use href="#collapse" /></svg></button>
          <button><svg viewBox="0 0 14 13"><use href="#info" width="16" height="16" /></svg></button>
        </div>
        <div class="browser">
          <ul class="tree">
            <li class="level-1"><i class="closed"></i><svg><use href="#folder" /></svg>pic</li>
            <li class="level-1"><i></i><svg><use href="#checker" /></svg>quake-signif.txt</li>
            <li class="level-1"><i></i><svg><use href="#poly" /></svg>quake-signif.txt</li>
            <li class="level-1"><i class="opened"></i><svg><use href="#qgis" /></svg>quake2012-2014</li>
            <li class="level-2"><i></i><svg><use href="#checker" /></svg>OpenStreetMap</li>
            <li class="level-2"><i></i><svg><use href="#points" /></svg>progress</li>
            <li class="level-2 current"><i></i><svg><use href="#points" /></svg>quake2012-2014</li>
          </ul>
          <div class="vscroll"><i class="tri up"></i><b></b><i class="tri down"></i></div>
          <div class="hscroll"><i class="tri left"></i><b></b><i class="tri right"></i></div>
        </div>
      </section>

      <section class="dock layers">
        <div class="dock-title">
          <span>图层</span>
          <button aria-label="浮动"><svg><use href="#float" /></svg></button>
          <button aria-label="关闭"><svg><use href="#close" /></svg></button>
        </div>
        <div class="dock-tools">
          <button class="on"><svg><use href="#brush" /></svg></button>
          <button><svg><use href="#group" /><use href="#badge-add" /></svg></button>
          <button><svg><use href="#eye" /></svg></button>
          <button><svg><use href="#funnel" /></svg></button>
          <button class="off drop"><svg><use href="#epsilon" /></svg></button>
          <button><svg><use href="#expand" /></svg></button>
          <button><svg><use href="#collapse" /></svg></button>
          <button><svg><use href="#remove" /></svg></button>
        </div>
        <div class="layer-list">
          <div class="layer">
            <input type="checkbox" id="layer-quake" checked />
            <span class="dot"></span>
            <label for="layer-quake">quake2012-2014</label>
          </div>
        </div>
      </section>
    </div>

    <div class="map">
      <svg class="canvas">
        <!-- the Americas -->
        <g transform="translate(-9 156) scale(.3333)">
          <polyline class="quakes" points="235,43 247,58 259,70 308,142 330,163 429,153 431,156 431,173 411,243 413,245 420,247 426,249 438,242 453,257 456,260 480,254 484,269 473,269 475,267 488,279 580,235 530,308 527,323 522,330 535,399 540,409 556,398 557,407 566,416 559,427 561,430 691,412 36,477 363,487 558,491 552,502 679,625" />
        </g>
        <!-- Mediterranean to the Pacific -->
        <g transform="translate(291 161) scale(.3333)">
          <polyline class="quakes" points="49,70 62,94 64,93 22,136 24,135 32,134 104,112 120,105 131,117 119,124 107,128 108,127 122,141 149,136 214,131 236,110 236,126 241,154 258,171 260,174 273,182 290,184 291,183 285,160 298,149 295,136 310,176 328,181 330,182 343,185 344,126 353,126 347,137 351,144 386,117 380,152 379,151 412,137 422,102 451,115 309,43 430,48 407,198 462,187 478,202 488,166 494,176 488,191 497,187 500,200 505,166 511,166 504,178 513,176 515,181 514,179 496,218 518,144 594,152 601,202 601,198 616,95 653,149 668,146 684,134 690,148 705,132 714,127 715,132 717,114 719,70 746,87 759,44 884,60 614,254 611,266 616,265 628,261 621,270 621,281 628,304 596,322 477,289 479,291 477,302 464,302 460,310 528,352 544,353 562,357 577,356 768,347 790,362 802,371 817,367 822,369 827,403 836,408 868,515 861,519 138,446 602,465" />
        </g>
      </svg>
    </div>

    <section class="style-dock">
      <div class="dock-title">
        <span>图层样式</span>
        <button aria-label="浮动"><svg><use href="#float" /></svg></button>
        <button aria-label="关闭"><svg><use href="#close" /></svg></button>
      </div>
      <div class="combo layer-combo">
        <svg><use href="#points" /></svg>
        <select class="field mono" aria-label="图层"><option>quake2012-2014</option></select>
      </div>
      <div class="style-body">
        <div class="tabs">
          <button class="active"><svg><use href="#broom" /></svg></button>
          <button><svg><use href="#label" /></svg></button>
          <button><svg><use href="#cube" /></svg></button>
          <button><svg><use href="#masks" /></svg></button>
          <button><svg><use href="#history" /></svg></button>
        </div>
        <div class="style-main">
          <div class="combo renderer">
            <svg><use href="#single" /></svg>
            <select class="field" aria-label="渲染器"><option>单一符号</option></select>
            <svg class="cursor" viewBox="0 0 8 12"><path d="M1 1v8.500l2-1.800 1.500 3.300 1.300-.6-1.500-3.200H7z" /></svg>
          </div>

          <div class="symbol-area">
            <svg class="preview" viewBox="0 0 57 57"><path d="M28.500 0v57M0 28.500h57" stroke="#aaa" /><circle cx="28.500" cy="28.500" r="2.200" fill="#e5b636" stroke="#6b5a20" stroke-width=".8" /></svg>
            <ul class="symbol-tree">
              <li><i class="opened"></i><span class="dot"></span><b>标记</b></li>
              <li class="current child"><span class="dot dull"></span>简单标记</li>
            </ul>
            <div class="symbol-buttons">
              <button aria-label="添加"><svg><use href="#addcross" /></svg></button>
              <button aria-label="移除"><svg><use href="#minusred" /></svg></button>
              <button aria-label="复制"><svg><use href="#dup" /><use href="#badge-new" /></svg></button>
            </div>
          </div>

          <div class="type-row">
            <label for="layer-type">符号图层类型</label>
            <input class="field" id="layer-type" type="text" value="简单标记" />
          </div>

          <div class="form">
            <div class="row">
              <label for="size">大小</label>
              <input class="field mono spin" id="size" type="text" value="2.000000" />
              <select class="field" aria-label="大小单位"><option>毫米</option></select>
              <i class="override"></i>
            </div>
            <div class="row">
              <label for="fill">填充颜色</label>
              <button class="field color full" id="fill"><span class="swatch gold"></span></button>
              <i class="override"></i>
            </div>
            <div class="row">
              <label for="stroke">描边颜色</label>
              <button class="field color full" id="stroke"><span class="swatch black"></span></button>
              <i class="override"></i>
            </div>
            <div class="row">
              <label for="stroke-style">描边样式</label>
              <div class="combo full line-combo">
                <span class="line"></span>
                <select class="field" id="stroke-style"><option>实线</option></select>
              </div>
              <i class="override"></i>
            </div>
            <div class="row">
              <label for="stroke-width">描边宽度</label>
              <input class="field spin" id="stroke-width" type="text" value="极细线" />
              <select class="field" aria-label="宽度单位"><option>毫米</option></select>
              <i class="override"></i>
            </div>
            <div class="row">
              <label for="join">连接样式</label>
              <div class="combo full join-combo">
                <svg><use href="#bevel" /></svg>
                <select class="field" id="join"><option>斜角</option></select>
              </div>
              <i class="override"></i>
            </div>
            <div class="row">
              <label for="rotation">旋转角度</label>
              <input class="field mono spin full" id="rotation" type="text" value="0.00 °" />
              <i class="override"></i>
            </div>
            <div class="row offset">
              <span>偏移量</span>
              <div class="pair">
                <label for="offset-x">横坐标</label>
                <input class="field mono spin" id="offset-x" type="text" value="0.000000" />
                <label for="offset-y">纵坐标</label>
                <input class="field mono spin" id="offset-y" type="text" value="0.000000" />
              </div>
              <select class="field" aria-label="偏移单位"><option>毫米</option></select>
              <i class="override"></i>
            </div>
            <div class="row anchor">
              <span>锚点</span>
              <div class="full stack">
                <select class="field" aria-label="竖直锚点"><option>竖直中心</option></select>
                <select class="field" aria-label="水平锚点"><option>水平中心</option></select>
              </div>
              <div class="stack"><i class="override"></i><i class="override"></i></div>
            </div>
          </div>

          <div class="shapes-row">
            <div class="shapes">
              <svg viewBox="0 0 20 20"><path d="M3 3h14v14H3z" /></svg>
              <svg viewBox="0 0 20 20"><path d="M10 3l7 7-7 7-7-7z" /></svg>
              <svg viewBox="0 0 20 20"><path d="M10 3l6.600 5-2.500 8.500H5.900L3.400 8z" /></svg>
              <svg viewBox="0 0 20 20"><path d="M10 3l6 3.500v7L10 17l-6-3.500v-7z" /></svg>
              <svg viewBox="0 0 20 20"><path d="M10 3.500L16.500 17h-13z" /></svg>
              <svg viewBox="0 0 20 20"><path d="M10 3.500L16 13H4z" /></svg>
              <svg viewBox="0 0 20 20"><path d="M10 3l1.700 4.800h4.900l-4 3 1.600 5.200L10 13l-4.200 3 1.600-5.200-4-3h4.900z" /></svg>
              <svg viewBox="0 0 20 20"><path d="M10 3l3.500 4H12v10H8V7H6.500z" /></svg>
              <svg viewBox="0 0 20 20" class="picked"><circle cx="10" cy="10" r="7" /></svg>
              <svg viewBox="0 0 20 20"><path d="M10 3v14M3 10h14" /></svg>
              <svg viewBox="0 0 20 20"><path d="M8.500 3h3v5.500H17v3h-5.500V17h-3v-5.500H3v-3h5.500z" /></svg>
              <svg viewBox="0 0 20 20"><path d="M3 3l14 14M17 3L3 17" /></svg>
              <svg viewBox="0 0 20 20"><path d="M10 3v14" /></svg>
              <svg viewBox="0 0 20 20" class="open"><path d="M3.500 3l7 7-7 7" /></svg>
              <svg viewBox="0 0 20 20"><path d="M4 3.500l6.500 6.500L4 16.500z" /></svg>
              <svg viewBox="0 0 20 20"><path d="M3 9.500a7 6.500 0 0 1 14 0z" /></svg>
              <svg viewBox="0 0 20 20"><path d="M9.500 3v5q-1 4-6 5V8q1-4 6-5z" /></svg>
              <svg viewBox="0 0 20 20"><path d="M10 3v7H3q0-6 7-7z" /></svg>
              <svg viewBox="0 0 20 20"><path d="M3.500 3h7v7h-7z" /></svg>
              <svg viewBox="0 0 20 20"><path d="M3.500 3h7v14h-7z" /></svg>
              <svg viewBox="0 0 20 20"><path d="M3.500 3.500L17 17H3.500z" /></svg>
              <svg viewBox="0 0 20 20"><path d="M10 3.500V17H4z" /></svg>
              <svg viewBox="0 0 20 20"><path d="M10.500 3.500L17 17h-6.500z" /></svg>
            </div>
            <i class="override"></i>
          </div>

          <div class="effects">
            <input type="checkbox" id="enable" checked /><label for="enable">启用图层</label>
            <button class="plain" aria-label="数据定义"><svg><use href="#defined" /></svg></button>
            <input type="checkbox" id="effect" /><label for="effect">绘制效果</label>
            <button aria-label="效果"><svg><use href="#star-off" /></svg></button>
          </div>
          <details class="rendering"><summary>图层渲染</summary></details>
          <div class="apply-row">
            <button class="undo" aria-label="撤销"><svg><use href="#undo" /></svg></button>
            <button class="redo" aria-label="重做"><svg><use href="#redo" /></svg></button>
            <span class="live"><input type="checkbox" id="live" checked /><label for="live">实时更新</label></span>
            <button class="apply">Apply</button>
          </div>
        </div>
      </div>

      <div class="watermark">
        <svg viewBox="0 0 46 42">
          <path d="M18 0C8 0 0 7 0 15c0 5 3 9 7 12l-2 6 7-4q3 1 6 1 18-1 18-15C36 7 28 0 18 0z" fill="#fff" fill-opacity=".85" />
          <circle cx="10" cy="10" r="2.200" fill="#333" /><circle cx="24" cy="10" r="2.200" fill="none" stroke="#999" />
          <path d="M31 13c-9 0-15 6-15 13s6 12 15 12q3 0 5-1l6 3-2-5c4-3 6-6 6-9 0-7-7-13-15-13z" fill="#fff" fill-opacity=".85" stroke="#999" stroke-width=".8" />
          <circle cx="27" cy="21" r="2" fill="none" stroke="#888" /><circle cx="37" cy="21" r="2" fill="none" stroke="#888" />
        </svg>
        <span>QGIS课堂</span>
      </div>
    </section>
  </main>

  <footer class="statusbar">
    <div class="locator">
      <svg><use href="#search" /></svg>
      <input class="field" type="text" placeholder="键入以定位(Ctrl+K)" aria-label="定位" />
    </div>
    <span class="ready">就绪</span>
    <label for="coord">坐标</label>
    <input class="field mono coord" id="coord" type="text" value="192.6,39.1" />
    <svg class="extent"><use href="#extent" /></svg>
    <label for="scale">比例尺</label>
    <select class="field mono scale" id="scale"><option>141709200</option></select>
    <svg class="lock"><use href="#lock" /></svg>
    <label for="magnifier">放大镜</label>
    <input class="field mono spin level" id="magnifier" type="text" value="100%" />
    <label class="rot-label" for="map-rotation">旋转角度</label>
    <input class="field mono spin level" id="map-rotation" type="text" value="0.0°" />
    <input type="checkbox" id="render" checked /><label for="render">渲染</label>
    <button class="crs"><svg><use href="#crs" /></svg>EPSG:4326</button>
    <svg class="chat"><use href="#chat" /></svg>
  </footer>
</body>
</html>
```
FILE: styles.css
```
* {
  box-sizing: border-box;
}
body {
  margin: 0;
  height: 100vh;
  display: flex;
  flex-direction: column;
  overflow: hidden;
  background: #f0f0f0;
  color: #111;
  font: 7px/10px "Noto Sans", "Noto Sans CJK SC", sans-serif;
}
button, input, select {
  font: inherit;
  color: inherit;
  margin: 0;
}
button {
  padding: 0;
  border: 0;
  background: none;
  display: flex;
  align-items: center;
  justify-content: center;
}
svg {
  display: block;
  flex: none;
}
ul {
  list-style: none;
  margin: 0;
  padding: 0;
}
.sprite {
  position: absolute;
  width: 0;
  height: 0;
}

/* title and menu */
.titlebar {
  height: 13px;
  flex: none;
  display: flex;
  align-items: center;
  background: #fff;
}
.logo {
  width: 9px;
  height: 9px;
  margin: 0 3px 0 1px;
}
.window-buttons {
  margin-left: auto;
  display: flex;
}
.window-buttons button {
  width: 26px;
}
.window-buttons svg {
  width: 7px;
  height: 7px;
  fill: none;
  stroke: #222;
}
.menubar {
  height: 12px;
  flex: none;
  display: flex;
  align-items: center;
  gap: 8px;
  padding-left: 6px;
}
.menubar a {
  color: #111;
  text-decoration: none;
}

/* toolbars */
.toolbar {
  height: 22px;
  flex: none;
  display: flex;
  align-items: center;
  padding-bottom: 1px;
  background: linear-gradient(#fbfbfb, #ececec);
  border-bottom: 1px solid #d2d2d2;
}
.group {
  display: flex;
  align-items: center;
  padding-left: 7px;
  margin-right: 1px;
  background: radial-gradient(#d4d4d4 40%, transparent 50%) 2px 0 / 2px 3px repeat-y;
  min-height: 14px;
}
.ib {
  width: 18px;
  height: 18px;
  margin-right: 1px;
  border-radius: 2px;
}
.ib:nth-of-type(3n) {
  margin-right: 0;
}
.ib svg {
  width: 14px;
  height: 14px;
}
.on {
  background: #dcdcdc;
  border: 1px solid #b5b5b5;
}
.off {
  color: #777;
}
.off svg {
  filter: grayscale(1);
  opacity: .3;
}
.drop::after {
  content: "";
  border: 2px solid transparent;
  border-top: 3px solid #555;
  border-bottom: 0;
  margin-left: 2px;
}
.off.drop::after {
  border-top-color: #999;
}
.ib.drop {
  width: 24px;
}
.sep {
  width: 1px;
  height: 16px;
  margin: 0 1px;
  background: #d8d8d8;
}
.more {
  width: 12px;
  font-size: 11px;
}
.more.wide {
  width: 20px;
}
.geocode {
  height: 16px;
  padding: 0 0 0 7px;
}
.geocode .field {
  width: 169px;
  height: 13px;
  font: 6px "Liberation Mono", monospace;
  padding: 0 1px;
}

/* inputs */
.field {
  height: 12px;
  min-width: 0;
  width: 100%;
  padding: 0 2px;
  line-height: 10px;
  background: #fff;
  border: 1px solid #bcbcbc;
  border-radius: 2px;
  outline: 0;
}
.field::placeholder {
  color: #777;
  opacity: 1;
}
.mono {
  font-family: "Liberation Mono", monospace;
  font-size: 6px;
}
select.field {
  appearance: none;
  background: url("data:image/svg+xml,%3Csvg xmlns='http://www.w3.org/2000/svg' width='5' height='3'%3E%3Cpath d='M0 0h5L2.500 3z' fill='%23555'/%3E%3C/svg%3E") right 4px center no-repeat, linear-gradient(#fff, #f7f7f7);
}
.spin {
  background: url("data:image/svg+xml,%3Csvg xmlns='http://www.w3.org/2000/svg' width='8' height='10'%3E%3Cpath d='M.5 0v10' stroke='%23ccc'/%3E%3Cpath d='M2.500 4L4.500 1.500 6.500 4zM2.500 6L4.500 8.500 6.500 6z' fill='%23555'/%3E%3C/svg%3E") right center no-repeat #fff;
}
.tolerance, .unit-px {
  color: #888;
  margin-right: 1px;
}
.tolerance {
  width: 48px;
}
.unit-px {
  width: 36px;
  opacity: 1;
}
input[type="checkbox"] {
  appearance: none;
  width: 8px;
  height: 8px;
  flex: none;
  background: #fff;
  border: 1px solid #ddd;
  border-radius: 1px;
}
input[type="checkbox"]:checked {
  background: url("data:image/svg+xml,%3Csvg xmlns='http://www.w3.org/2000/svg' viewBox='0 0 8 8'%3E%3Cpath d='M1.500 4l2 2.500L6.500 1' fill='none' stroke='%23111' stroke-width='1.200'/%3E%3C/svg%3E") center / 8px no-repeat #fff;
}

/* workspace */
.workspace {
  flex: 1;
  min-height: 0;
  display: flex;
  border-top: 1px solid #c8c8c8;
}
.side-tools {
  width: 28px;
  flex: none;
  padding: 7px 0 0 3px;
  background: linear-gradient(90deg, #fafafa, #ededed);
  border-right: 1px solid #ccc;
}
.side-tools .ib {
  margin: 0;
}
.left-docks {
  width: 218px;
  flex: none;
  display: flex;
  flex-direction: column;
  padding: 0 1px;
}
.dock-title {
  height: 12px;
  flex: none;
  display: flex;
  align-items: center;
  gap: 1px;
  padding: 0 1px 0 2px;
}
.dock-title span {
  margin-right: auto;
}
.dock-title svg {
  width: 7px;
  height: 7px;
}
.dock-tools {
  height: 15px;
  margin-bottom: 2px;
  display: flex;
  align-items: center;
  padding-left: 2px;
}
.dock-tools button {
  width: 14px;
  height: 14px;
  border-radius: 2px;
}
.dock-tools .drop {
  width: 21px;
}
.dock-tools svg {
  width: 10px;
  height: 10px;
}
.browser {
  display: grid;
  grid-template: 76px 8px / 1fr 8px;
  border: 1px solid #c6c6c6;
  background: #fff;
}
.tree {
  display: flex;
  flex-direction: column;
  padding-bottom: 2px;
}
.tree li {
  flex: 1;
  display: flex;
  align-items: center;
  gap: 3px;
}
.tree svg {
  width: 9px;
  height: 9px;
}
.tree i, .symbol-tree i {
  width: 8px;
  display: flex;
}
.level-1 {
  padding-left: 36px;
}
.level-2 {
  padding-left: 47px;
}
.current {
  background: #efefef;
}
.closed::before {
  content: "";
  border: 2px solid transparent;
  border-left: 3px solid #555;
  border-right: 0;
}
.opened::before {
  content: "";
  border: 2px solid transparent;
  border-top: 3px solid #555;
  border-bottom: 0;
}
.vscroll, .hscroll {
  display: flex;
  align-items: center;
  justify-content: space-between;
  background: #dcdcdc;
  border: 0 solid #c6c6c6;
}
.vscroll {
  flex-direction: column;
  border-left-width: 1px;
}
.vscroll b {
  width: 7px;
  height: 16px;
  margin-bottom: 12px;
  background: #fff;
}
.hscroll {
  border-top-width: 1px;
  grid-column: 1 / 3;
  padding-right: 8px;
}
.hscroll b {
  width: 101px;
  height: 7px;
  margin-right: auto;
  background: #fff;
}
.tri {
  width: 7px;
  height: 7px;
  background: #f4f4f4;
  display: flex;
  align-items: center;
  justify-content: center;
}
.tri::before {
  content: "";
  border: 2px solid transparent;
}
.up::before { border-bottom-color: #444; border-top: 0; }
.down::before { border-top-color: #444; border-bottom: 0; }
.left::before { border-right-color: #444; border-left: 0; }
.right::before { border-left-color: #444; border-right: 0; }
.layers {
  flex: 1;
  min-height: 0;
  display: flex;
  flex-direction: column;
  margin-top: 2px;
}
.layers .dock-tools {
  margin-bottom: 1px;
}
.layer-list {
  flex: 1;
  border: 1px solid #c6c6c6;
  background: #fff;
}
.layer {
  height: 11px;
  display: flex;
  align-items: center;
  padding-left: 12px;
}
.layer label {
  flex: 1;
  height: 11px;
  font-weight: bold;
  text-decoration: underline;
  background: #e8f3fb;
  border: 1px solid #cfe4f2;
  border-right: 5px solid #d6dadd;
  line-height: 9px;
}
.dot {
  width: 5px;
  height: 5px;
  border: 1px solid #8a7430;
  border-radius: 50%;
  background: #e5b636;
}
.layer .dot {
  margin: 0 4px 0 6px;
}
.dull {
  background: #8d9a68;
  border-color: #66735a;
}
.map {
  flex: 1;
  min-width: 0;
  margin-left: 2px;
  background: #fff;
  border: 1px solid #c6c6c6;
}
.canvas {
  width: 100%;
  height: 100%;
}
.quakes {
  fill: none;
  stroke: none;
  marker: url(#quake);
}

/* layer styling */
.style-dock {
  width: 218px;
  flex: none;
  display: flex;
  flex-direction: column;
  position: relative;
  padding-left: 5px;
}
.style-dock > .dock-title {
  padding-left: 0;
}
.combo {
  position: relative;
}
.combo svg {
  position: absolute;
  left: 4px;
  top: 2px;
  width: 8px;
  height: 8px;
}
.layer-combo {
  margin: 1px 2px 1px 0;
  height: 12px;
}
.combo select {
  display: block;
  padding-left: 13px;
}
.style-body {
  flex: 1;
  min-height: 0;
  display: flex;
}
.tabs {
  width: 21px;
  flex: none;
  background: #5e5e5e;
  margin-bottom: 2px;
}
.tabs button {
  width: 21px;
  height: 18px;
}
.tabs .active {
  height: 22px;
  padding-top: 2px;
  background: #f0f0f0;
}
.tabs svg {
  width: 12px;
  height: 12px;
}
.style-main {
  flex: 1;
  min-width: 0;
  display: flex;
  flex-direction: column;
}
.renderer {
  height: 18px;
  border: 2px solid #e51a1a;
}
.renderer select {
  height: 14px;
}
.renderer > svg {
  top: 3px;
}
.renderer .cursor {
  left: auto;
  right: 55px;
  top: 7px;
  height: 11px;
  fill: #fff;
  stroke: #333;
  stroke-width: .7;
}
.symbol-area {
  display: grid;
  grid-template-columns: 61px 1fr 13px;
  column-gap: 4px;
  height: 79px;
  padding-top: 3px;
  border-bottom: 2px solid #dadada;
}
.preview {
  width: 57px;
  height: 57px;
  margin: 7px 0 0 2px;
}
.symbol-tree {
  height: 71px;
  margin-left: -4px;
  background: #fff;
  border: 1px solid #c6c6c6;
}
.symbol-tree li {
  height: 11px;
  display: flex;
  align-items: center;
  gap: 5px;
  padding-left: 4px;
}
.symbol-tree i {
  width: 6px;
}
.symbol-tree .child {
  padding-left: 26px;
}
.symbol-buttons {
  display: flex;
  flex-direction: column;
  gap: 4px;
}
.symbol-buttons button, .effects button, .apply-row button {
  height: 12px;
  background: #fafafa;
  border: 1px solid #c4c4c4;
  border-radius: 2px;
}
.symbol-buttons svg, .effects button svg, .apply-row svg {
  width: 9px;
  height: 9px;
}
.type-row {
  display: flex;
  align-items: center;
  padding: 4px 0 4px 2px;
}
.type-row label {
  white-space: nowrap;
}
.type-row .field {
  height: 13px;
  flex: 1;
  padding-left: 0;
}
.form {
  padding: 2px 0 0 7px;
}
.row {
  height: 18px;
  display: grid;
  grid-template-columns: 31px 1fr 43px 7px;
  column-gap: 3px;
  align-items: center;
  white-space: nowrap;
}
.full {
  grid-column: 2 / 4;
}
.offset {
  height: 32px;
}
.anchor {
  height: 36px;
}
.pair {
  display: grid;
  grid-template-columns: 21px 1fr;
  grid-auto-rows: 16px;
  column-gap: 3px;
  align-items: center;
}
.stack {
  display: grid;
  grid-auto-rows: 18px;
  align-items: center;
}
.override {
  justify-self: center;
  border: 3px solid transparent;
  border-right-color: #888;
  border-left: 0;
}
.color {
  justify-content: flex-start;
  padding: 1px 8px 1px 1px;
  background: url("data:image/svg+xml,%3Csvg xmlns='http://www.w3.org/2000/svg' width='7' height='10'%3E%3Cpath d='M.5 0v10' stroke='%23bbb'/%3E%3Cpath d='M2 4h4L4 6.500z' fill='%23555'/%3E%3C/svg%3E") right center no-repeat #fff;
}
.swatch {
  flex: 1;
  height: 8px;
  border-radius: 2px;
}
.gold { background: #e5b636; }
.black { background: #232323; }
.line {
  position: absolute;
  left: 3px;
  top: 5px;
  width: 18px;
  height: 1px;
  background: #222;
}
.line-combo select {
  padding-left: 21px;
}
.shapes-row {
  display: flex;
  align-items: center;
  gap: 4px;
  padding: 4px 0 0 7px;
}
.shapes {
  width: 175px;
  height: 123px;
  display: grid;
  grid-template-columns: repeat(8, 1fr);
  grid-auto-rows: 20px;
  align-content: start;
  padding-right: 11px;
  background: #fff;
  border: 1px solid #c6c6c6;
}
.shapes svg {
  width: 20px;
  height: 20px;
  fill: #c8c8c8;
  stroke: #444;
  stroke-width: .8;
}
.shapes .picked {
  fill: #8ab0d3;
  stroke: #5c7f9f;
}
.shapes .open {
  fill: none;
}
.effects {
  height: 14px;
  margin-top: 7px;
  padding-left: 2px;
  display: flex;
  align-items: center;
  gap: 2px;
}
.effects .plain {
  border: 0;
  background: none;
  margin: 0 25px 0 8px;
}
.effects > button:last-child {
  width: 13px;
  margin-left: 6px;
}
.rendering {
  margin: 12px 0 0 3px;
}
.rendering summary {
  font-weight: bold;
}
.apply-row {
  margin: auto 2px 2px;
  display: flex;
  align-items: center;
  gap: 3px;
}
.apply-row button {
  width: 13px;
}
.apply-row .undo { color: #dd7130; }
.apply-row .redo { color: #5fa062; }
.live {
  margin-left: auto;
  display: flex;
  align-items: center;
  gap: 2px;
  padding-right: 7px;
}
.apply-row .apply {
  width: 45px;
  font: 6px "Liberation Mono", monospace;
}
.watermark {
  position: absolute;
  left: 15px;
  bottom: 14px;
  display: flex;
  align-items: center;
  gap: 6px;
  font-size: 25px;
  line-height: 26px;
  color: #fff;
  text-shadow: 1px 1px 1px #888, 0 0 1px #999;
  white-space: nowrap;
  pointer-events: none;
}
.watermark svg {
  width: 46px;
  height: 42px;
}

/* status bar */
.statusbar {
  height: 16px;
  flex: none;
  display: flex;
  align-items: center;
  gap: 3px;
  padding: 0 4px 0 2px;
  font-size: 6px;
  white-space: nowrap;
}
.locator {
  position: relative;
  width: 112px;
}
.locator svg {
  position: absolute;
  left: 5px;
  top: 3px;
  width: 7px;
  height: 7px;
}
.locator .field {
  display: block;
  padding-left: 15px;
  font-family: "Liberation Mono", "Noto Sans CJK SC", monospace;
}
.ready {
  margin: 0 auto 0 3px;
}
.statusbar > svg {
  width: 10px;
  height: 10px;
}
.statusbar .coord {
  width: 42px;
  padding: 0 1px;
}
.statusbar .extent { margin: 0 4px 0 0; }
.statusbar .scale { width: 46px; }
.statusbar .lock { width: 8px; height: 8px; margin: 0 3px; }
.statusbar .level { width: 51px; }
.rot-label { margin-left: 2px; }
.statusbar input[type="checkbox"] { margin-left: 2px; }
.crs {
  font: 6px "Liberation Mono", monospace;
  gap: 1px;
  margin: 0 8px 0 6px;
}
.crs svg {
  width: 9px;
  height: 9px;
}
```
